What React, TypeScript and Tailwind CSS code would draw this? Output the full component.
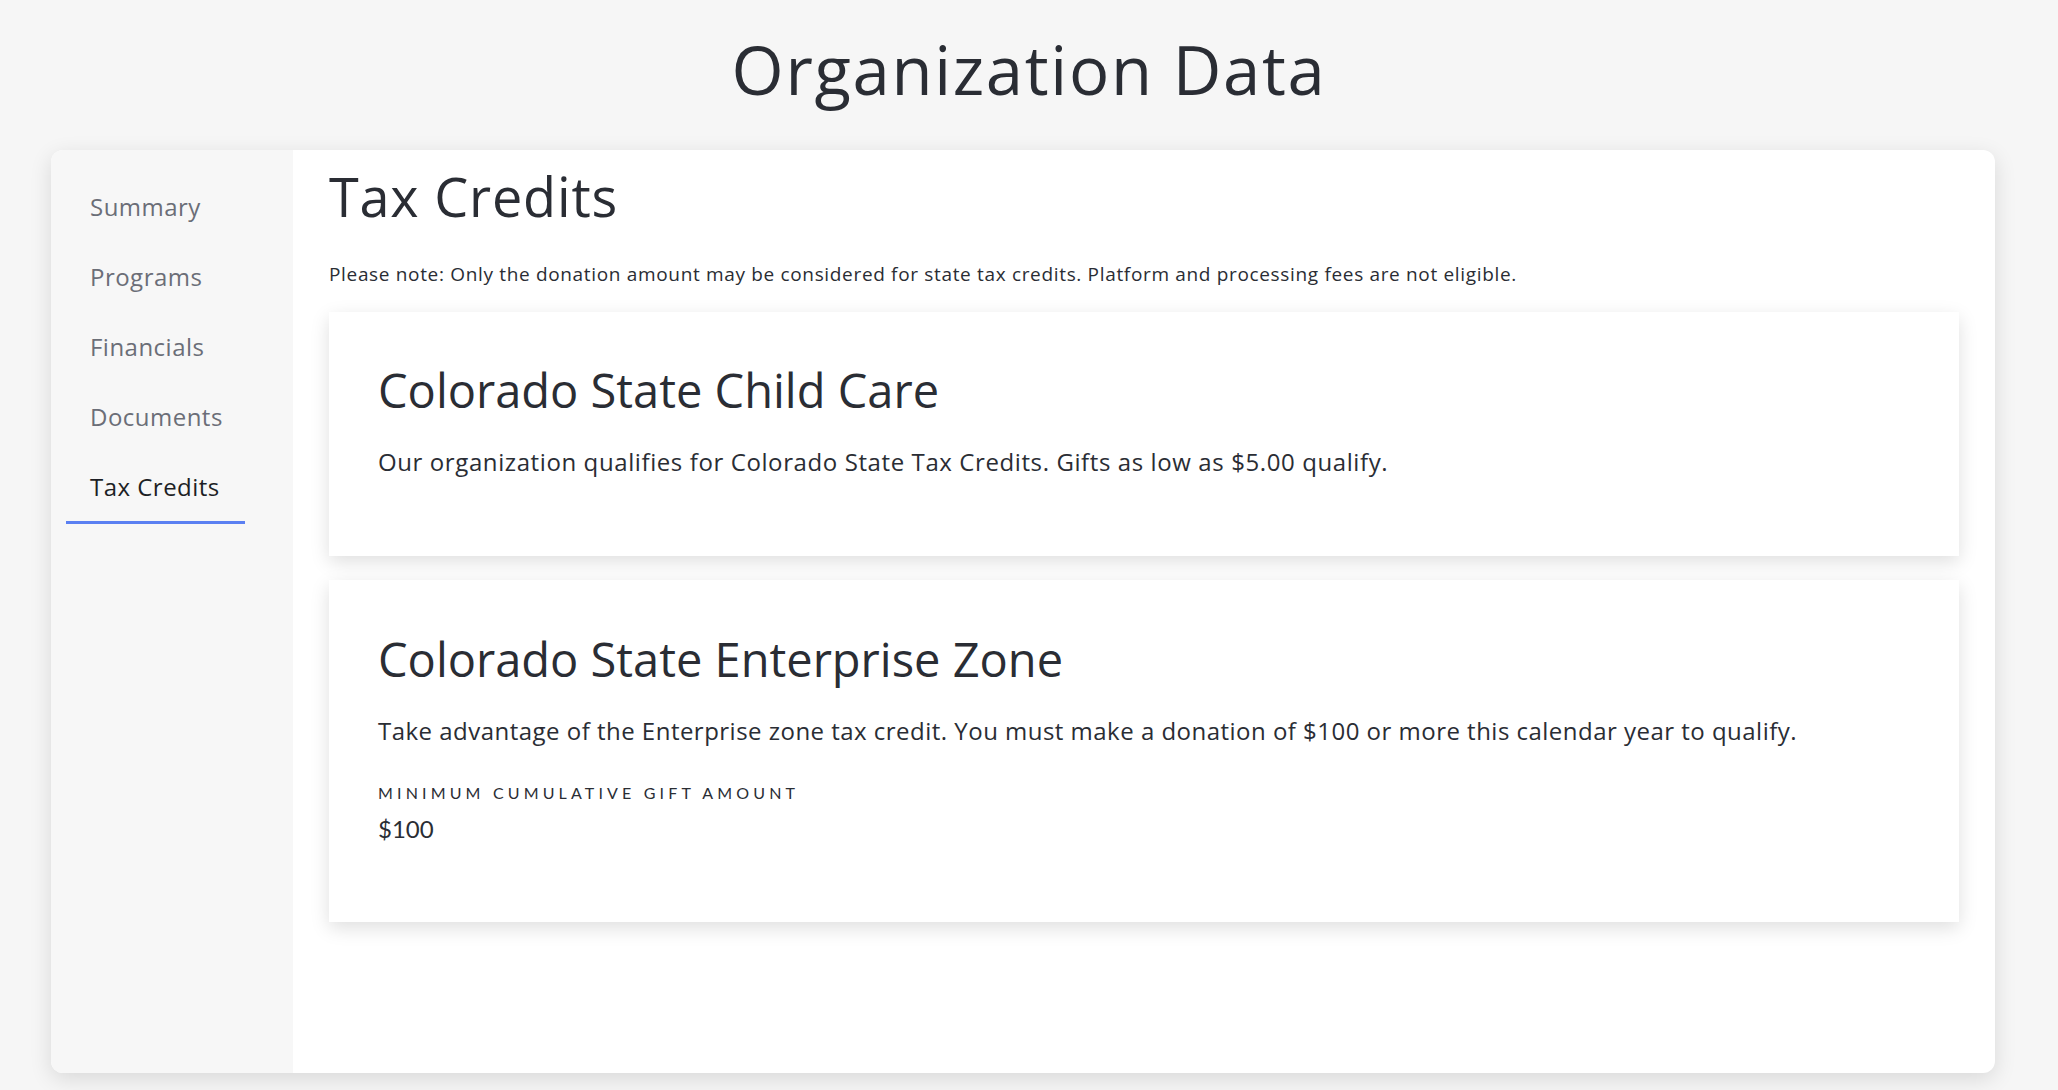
const tabs = ["Summary", "Programs", "Financials", "Documents", "Tax Credits"]

export default function App() {
  return (
    <div className="min-h-screen bg-[#f6f6f6] pt-[36px] pb-[16px] font-['Open_Sans',sans-serif] text-[#2a2d34]">
      <h1 className="text-center text-[67px] leading-none font-normal tracking-[0.025em] mb-[47px]">Organization Data</h1>

      <div className="mx-[51px] flex h-[923px] w-[1944px] overflow-hidden rounded-[12px] bg-white shadow-[0_6px_22px_rgba(0,0,0,0.12)]">
        {/* Sidebar */}
        <nav className="w-[242px] shrink-0 bg-[#f7f7f7] pl-[15px] pt-[24px]">
          {tabs.map((t) => {
            const active = t === "Tax Credits"
            return (
              <div
                key={t}
                className={
                  active
                    ? "w-[179px] pl-[24px] pt-[21px] pb-[22px] text-[24px] leading-none tracking-[0.02em] text-[#1d1f25] border-b-[3px] border-[#5b80f2]"
                    : "w-[179px] pl-[24px] pt-[21px] pb-[22px] text-[24px] leading-none tracking-[0.02em] text-[#6b6e77] border-b-[3px] border-transparent"
                }
              >
                {t}
              </div>
            )
          })}
        </nav>

        {/* Main */}
        <main className="flex-1 px-[36px] pt-[19px]">
          <h2 className="text-[54px] leading-none font-normal tracking-[0.015em]">Tax Credits</h2>
          <p className="mt-[42px] text-[19px] leading-none tracking-[0.035em]">
            Please note: Only the donation amount may be considered for state tax credits. Platform and processing fees
            are not eligible.
          </p>

          <div className="mt-[28px] flex flex-col gap-[24px]">
            <section className="bg-white px-[49px] pt-[55px] pb-[82px] shadow-[0_6px_18px_rgba(0,0,0,0.13)]">
              <h3 className="text-[47px] leading-none font-normal">Colorado State Child Care</h3>
              <p className="mt-[36px] text-[24px] leading-none tracking-[0.025em]">
                Our organization qualifies for Colorado State Tax Credits. Gifts as low as $5.00 qualify.
              </p>
            </section>

            <section className="bg-white px-[49px] pt-[56px] pb-[81px] shadow-[0_6px_18px_rgba(0,0,0,0.13)]">
              <h3 className="text-[47px] leading-none font-normal">Colorado State Enterprise Zone</h3>
              <p className="mt-[36px] text-[24px] leading-none tracking-[0.02em]">
                Take advantage of the Enterprise zone tax credit. You must make a donation of $100 or more this calendar
                year to qualify.
              </p>
              <div className="mt-[42px] font-['Lato',sans-serif] text-[16px] leading-none uppercase tracking-[0.26em]">
                Minimum Cumulative Gift Amount
              </div>
              <div className="mt-[16px] font-['Lato',sans-serif] text-[24px] leading-none">$100</div>
            </section>
          </div>
        </main>
      </div>
    </div>
  )
}
